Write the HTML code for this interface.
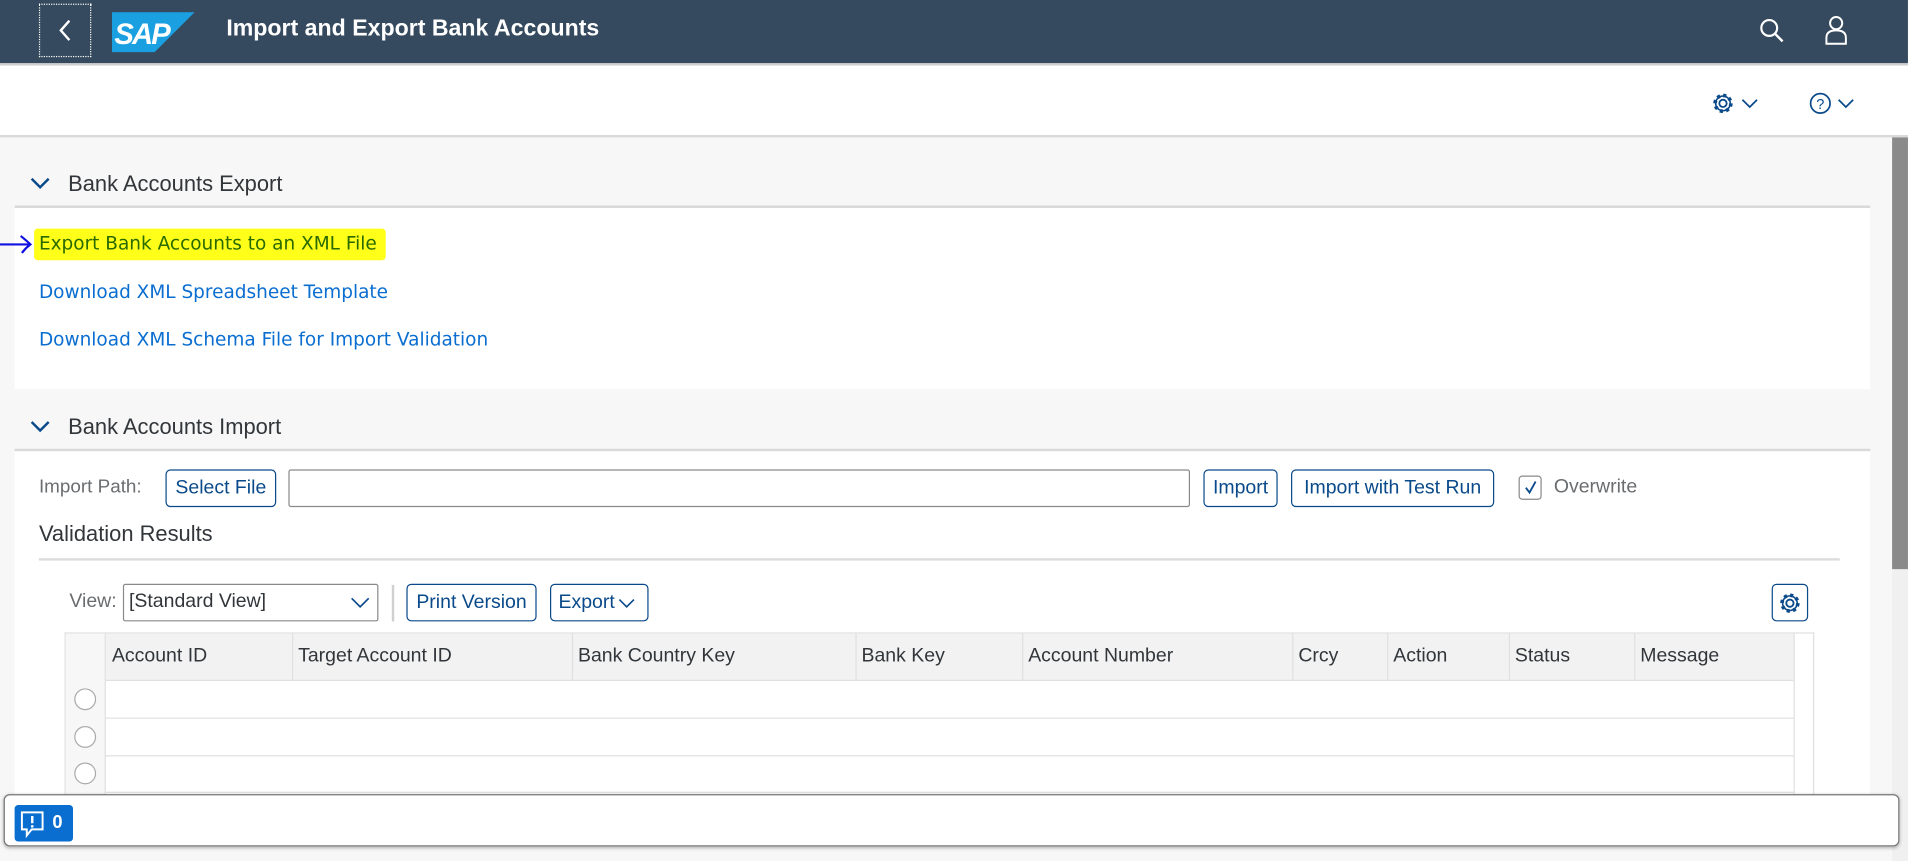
<!DOCTYPE html>
<html><head><meta charset="utf-8"><style>
*{box-sizing:border-box;margin:0;padding:0}
html,body{width:1908px;height:861px;overflow:hidden;background:#f7f7f7;font-family:"Liberation Sans",sans-serif}
#w{position:absolute;left:0;top:0;width:1568px;height:708px;transform:scale(1.2168,1.2161);transform-origin:0 0;background:#f7f7f7}
.a{position:absolute}
.hdr{left:0;top:0;width:1568px;height:52px;background:#354a5f}
.t{white-space:nowrap;line-height:1}
.btn{position:absolute;border:1.5px solid #0a4a8a;border-radius:4px;background:#fff;color:#0a4a8a;font-size:16px;display:flex;align-items:center;justify-content:center;white-space:nowrap}
.lnk{position:absolute;left:32px;font-family:"DejaVu Sans",sans-serif;font-size:15.2px;color:#0a6ed1;white-space:nowrap;line-height:1}
.th{position:absolute;top:532px;font-size:16px;color:#32363a}
.vl{position:absolute;top:521px;height:39px;width:1px;background:#e0e0e0}
.hl{position:absolute;left:87px;width:1387px;height:1px;background:#e0e0e0}
.rad{position:absolute;left:61px;width:18px;height:18px;border:1.5px solid #aaa;border-radius:50%;background:#fff}
</style></head><body><div id="w">
<div class="a hdr"></div>
<div class="a" style="left:32px;top:3px;width:43px;height:44px;border:1px dotted #fff"></div>
<svg class="a" style="left:44px;top:14px" width="20" height="22" viewBox="0 0 20 22"><path d="M13 3 L6 11 L13 19" fill="none" stroke="#fff" stroke-width="2"/></svg>
<svg class="a" style="left:92px;top:10px" width="68" height="33" viewBox="0 0 68 33"><polygon points="0,0 68,0 35,33 0,33" fill="#1a9fe0"/><text x="2" y="26" font-family="Liberation Sans" font-weight="bold" font-style="italic" font-size="24" fill="#fff" letter-spacing="-1.5">SAP</text></svg>
<div class="a t" style="left:186px;top:14px;color:#fff;font-weight:bold;font-size:19px">Import and Export Bank Accounts</div>
<svg class="a" style="left:1444px;top:13px" width="24" height="24" viewBox="0 0 24 24"><circle cx="10" cy="10" r="6.5" fill="none" stroke="#fff" stroke-width="1.8"/><path d="M15 15 L21 21" stroke="#fff" stroke-width="2"/></svg>
<svg class="a" style="left:1498px;top:12px" width="22" height="26" viewBox="0 0 22 26"><circle cx="11" cy="7" r="5" fill="none" stroke="#fff" stroke-width="1.6"/><path d="M3 24 V19 Q3 13 11 13 Q19 13 19 19 V24 Z" fill="none" stroke="#fff" stroke-width="1.6"/></svg>
<div class="a" style="left:0;top:52px;width:1568px;height:2px;background:#cfcfcf"></div>
<div class="a" style="left:0;top:54px;width:1568px;height:57px;background:#fff"></div>
<svg class="a" style="left:1406px;top:75px" width="42" height="20" viewBox="0 0 42 20"><circle cx="10" cy="10" r="3" fill="none" stroke="#0a4a8a" stroke-width="1.5"/><circle cx="10" cy="10" r="6.5" fill="none" stroke="#0a4a8a" stroke-width="3" stroke-dasharray="2.5 2.6"/><circle cx="10" cy="10" r="6" fill="none" stroke="#0a4a8a" stroke-width="1.3"/><path d="M26 7 L32 13 L38 7" fill="none" stroke="#0a4a8a" stroke-width="1.4"/></svg>
<svg class="a" style="left:1486px;top:75px" width="42" height="20" viewBox="0 0 42 20"><circle cx="10" cy="10" r="8" fill="none" stroke="#0a4a8a" stroke-width="1.4"/><text x="10" y="14.5" text-anchor="middle" font-size="12" font-family="Liberation Sans" fill="#0a4a8a">?</text><path d="M25 7 L31 13 L37 7" fill="none" stroke="#0a4a8a" stroke-width="1.4"/></svg>
<div class="a" style="left:0;top:111px;width:1568px;height:2px;background:#d9d9d9"></div>
<div class="a" style="left:1555px;top:113px;width:13px;height:595px;background:#f0f0f0"></div>
<div class="a" style="left:1555px;top:113px;width:13px;height:355px;background:#8a8a8a"></div>
<svg class="a" style="left:24px;top:144px" width="18" height="14" viewBox="0 0 18 14"><path d="M2 3 L9 10 L16 3" fill="none" stroke="#0a4a8a" stroke-width="2"/></svg>
<div class="a t" style="left:56px;top:142px;font-size:18px;color:#32363a">Bank Accounts Export</div>
<div class="a" style="left:12px;top:169px;width:1525px;height:151px;background:#fff;border-top:2px solid #d9d9d9"></div>
<div class="a" style="left:28px;top:188px;width:289px;height:26px;background:#ffff1a;border-radius:3px"></div>
<svg class="a" style="left:0;top:192px" width="28" height="18" viewBox="0 0 28 18"><path d="M0 9 H24 M17 2 Q22 6 25 9 Q21 12 18 16" fill="none" stroke="#1010e0" stroke-width="1.8"/></svg>
<div class="lnk" style="top:193px;color:#2a6a00">Export Bank Accounts to an XML File</div>
<div class="lnk" style="top:233px">Download XML Spreadsheet Template</div>
<div class="lnk" style="top:272px">Download XML Schema File for Import Validation</div>
<svg class="a" style="left:24px;top:344px" width="18" height="14" viewBox="0 0 18 14"><path d="M2 3 L9 10 L16 3" fill="none" stroke="#0a4a8a" stroke-width="2"/></svg>
<div class="a t" style="left:56px;top:342px;font-size:18px;color:#32363a">Bank Accounts Import</div>
<div class="a" style="left:12px;top:369px;width:1525px;height:339px;background:#fff;border-top:2px solid #d9d9d9"></div>
<div class="a t" style="left:32px;top:393px;font-size:15.5px;color:#6a6d70">Import Path:</div>
<div class="btn" style="left:136px;top:386px;width:91px;height:31px">Select File</div>
<div class="a" style="left:237px;top:386px;width:741px;height:31px;border:1.5px solid #8a8a8a;border-radius:2px"></div>
<div class="btn" style="left:989px;top:386px;width:61px;height:31px">Import</div>
<div class="btn" style="left:1061px;top:386px;width:167px;height:31px">Import with Test Run</div>
<div class="a" style="left:1248px;top:391px;width:19px;height:20px;border:1.5px solid #8a8a8a;border-radius:3px;background:#fff"></div>
<svg class="a" style="left:1250px;top:393px" width="16" height="16" viewBox="0 0 16 16"><path d="M4 8 L7 12 L12 3" fill="none" stroke="#0a4a8a" stroke-width="1.5"/></svg>
<div class="a t" style="left:1277px;top:393px;font-size:16px;color:#6a6d70">Overwrite</div>
<div class="a t" style="left:32px;top:430px;font-size:18px;color:#32363a">Validation Results</div>
<div class="a" style="left:32px;top:459px;width:1480px;height:2px;background:#dcdcdc"></div>
<div class="a t" style="left:57px;top:487px;font-size:16px;color:#6a6d70">View:</div>
<div class="a" style="left:101px;top:480px;width:210px;height:31px;border:1.5px solid #8a8a8a;border-radius:2px"></div>
<div class="a t" style="left:106px;top:487px;font-size:16px;color:#32363a">[Standard View]</div>
<svg class="a" style="left:287px;top:488px" width="18" height="14" viewBox="0 0 18 14"><path d="M2 4 L9 11 L16 4" fill="none" stroke="#0a4a8a" stroke-width="1.4"/></svg>
<div class="a" style="left:322px;top:481px;width:2px;height:30px;background:#d0d0d0"></div>
<div class="btn" style="left:334px;top:480px;width:107px;height:31px">Print Version</div>
<div class="btn" style="left:452px;top:480px;width:81px;height:31px;justify-content:flex-start;padding-left:6px">Export<svg style="margin-left:3px" width="14" height="12" viewBox="0 0 14 12"><path d="M1 3 L7 9 L13 3" fill="none" stroke="#0a4a8a" stroke-width="1.3"/></svg></div>
<div class="btn" style="left:1456px;top:480px;width:30px;height:31px"><svg width="20" height="20" viewBox="0 0 20 20"><circle cx="10" cy="10" r="3" fill="none" stroke="#0a4a8a" stroke-width="1.5"/><circle cx="10" cy="10" r="6.5" fill="none" stroke="#0a4a8a" stroke-width="3" stroke-dasharray="2.5 2.6"/><circle cx="10" cy="10" r="6" fill="none" stroke="#0a4a8a" stroke-width="1.3"/></svg></div>
<div class="a" style="left:53px;top:520px;width:1438px;height:176px;border:1px solid #e0e0e0;border-bottom:none;background:#fff"></div>
<div class="a" style="left:54px;top:521px;width:1420px;height:39px;background:#f2f2f2;border-bottom:1px solid #e0e0e0"></div>
<div class="a" style="left:54px;top:521px;width:33px;height:175px;background:#f7f7f7;border-right:1px solid #e0e0e0"></div>
<div class="a" style="left:1474px;top:521px;width:1px;height:175px;background:#e0e0e0"></div>
<div class="vl" style="left:240px"></div><div class="vl" style="left:470px"></div><div class="vl" style="left:703px"></div><div class="vl" style="left:840px"></div><div class="vl" style="left:1062px"></div><div class="vl" style="left:1140px"></div><div class="vl" style="left:1240px"></div><div class="vl" style="left:1343px"></div>
<div class="th t" style="left:92px">Account ID</div>
<div class="th t" style="left:245px">Target Account ID</div>
<div class="th t" style="left:475px">Bank Country Key</div>
<div class="th t" style="left:708px">Bank Key</div>
<div class="th t" style="left:845px">Account Number</div>
<div class="th t" style="left:1067px">Crcy</div>
<div class="th t" style="left:1145px">Action</div>
<div class="th t" style="left:1245px">Status</div>
<div class="th t" style="left:1348px">Message</div>
<div class="hl" style="top:590px"></div><div class="hl" style="top:621px"></div><div class="hl" style="top:651px"></div>
<div class="rad" style="top:566px"></div><div class="rad" style="top:597px"></div><div class="rad" style="top:627px"></div>
<div class="a" style="left:0;top:696px;width:1555px;height:12px;background:#f7f7f7"></div>
<div class="a" style="left:3px;top:653px;width:1558px;height:43px;background:#fff;border:1px solid #777;border-radius:5px;box-shadow:0 1px 3px rgba(0,0,0,.3)"></div>
<div class="a" style="left:12px;top:662px;width:48px;height:30px;background:#0a6ed1;border-radius:3px"></div>
<svg class="a" style="left:16px;top:666px" width="22" height="24" viewBox="0 0 22 24"><path d="M2 2 H19 V16 H10 L6 21 V16 H2 Z" fill="none" stroke="#fff" stroke-width="1.6"/><path d="M10.5 5 V11" stroke="#fff" stroke-width="2"/><circle cx="10.5" cy="13.5" r="1.1" fill="#fff"/></svg>
<div class="a t" style="left:43px;top:669px;color:#fff;font-weight:bold;font-size:15px">0</div>
</div></body></html>
